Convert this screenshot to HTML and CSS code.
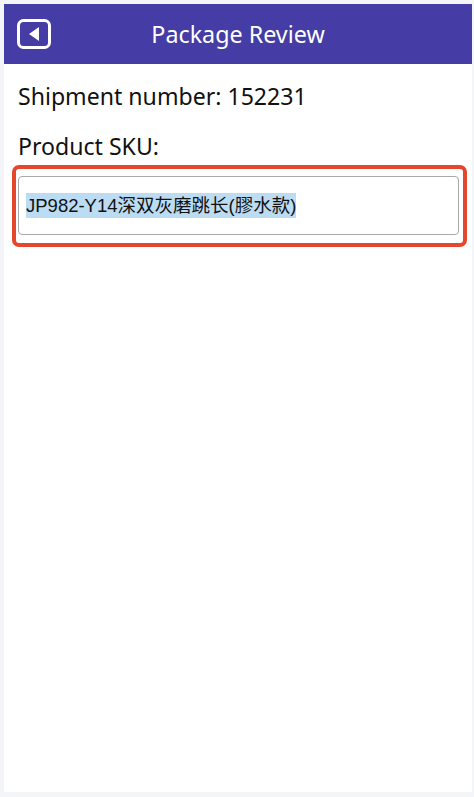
FILE: index.html
```html
<!DOCTYPE html>
<html lang="en">
<head>
<meta charset="utf-8">
<title>Package Review</title>
<link rel="stylesheet" href="styles.css">
</head>
<body>
<div class="screen">
  <header class="topbar">
    <button class="back" type="button" aria-label="Back">
      <svg viewBox="0 0 34 30" width="34" height="30" aria-hidden="true">
        <rect x="1.5" y="1.5" width="31" height="27" rx="5" fill="none" stroke="#fff" stroke-width="3"/>
        <path d="M22 8v14L12 15z" fill="#fff"/>
      </svg>
    </button>
    <h1 class="title">Package Review</h1>
  </header>
  <main class="content">
    <p class="line shipment">Shipment number: 152231</p>
    <p class="line sku">Product SKU:</p>
    <div class="highlight">
      <div class="field"><span class="selected">JP982-Y14深双灰磨跳长(膠水款)</span></div>
    </div>
  </main>
</div>
</body>
</html>
```

FILE: styles.css
```css
* { box-sizing: border-box; }
html, body { margin: 0; height: 100%; }
body {
  background: #f4f5f8;
  padding: 4px 2px 5px 4px;
  font-family: "Noto Sans", "Noto Sans CJK SC", sans-serif;
  color: #111;
}
.screen {
  height: 100%;
  background: #fff;
  display: flex;
  flex-direction: column;
}
.topbar {
  position: relative;
  height: 60px;
  flex: none;
  background: #453ca6;
  display: flex;
  align-items: center;
  justify-content: center;
}
.back {
  position: absolute;
  left: 13px;
  top: 15px;
  padding: 0;
  border: 0;
  background: none;
  display: flex;
}
.title {
  margin: 0;
  color: #fff;
  font-size: 23.3px;
  font-weight: 400;
}
.content { padding: 15px 0 0 8px; }
.line {
  margin: 0;
  font-size: 23.1px;
  line-height: 34px;
  padding-left: 6px;
}
.sku { margin-top: 16px; }
.highlight {
  margin-top: 2px;
  width: 455px;
  height: 82px;
  border: 4px solid #e4472b;
  border-radius: 7px;
  padding: 7px 4px 8px 2px;
}
.field {
  height: 59px;
  border: 1px solid #a9a9a9;
  border-radius: 4px;
  padding-left: 7px;
  display: flex;
  align-items: center;
  font-family: "Liberation Sans", "Noto Sans CJK SC", sans-serif;
  font-size: 18.5px;
}
.selected {
  background: #bcdcf3;
  line-height: 25px;
}
```
